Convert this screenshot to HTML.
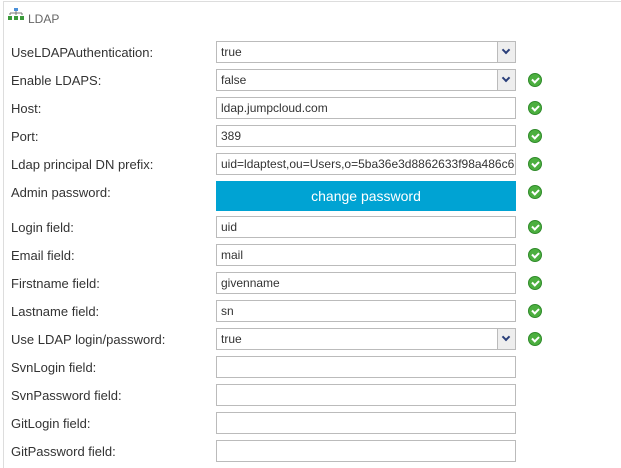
<!DOCTYPE html>
<html style="overflow:hidden;height:468px"><head><style>
body{margin:0;width:621px;height:468px;background:#fff;font-family:"Liberation Sans",sans-serif;position:relative;overflow:hidden}
.frame{position:absolute;left:3px;top:1px;width:630px;height:470px;border-left:1px solid #ddd;border-top:1px solid #ddd}
.t{position:absolute;left:28px;top:12px;font-size:12px;color:#666}
.l{position:absolute;left:11px;font-size:13px;color:#333}
.i{position:absolute;left:216px;height:20px;border:1px solid #bbb;box-sizing:content-box;font-size:12px;color:#333;line-height:20px;padding-left:4px;width:294px;overflow:hidden;white-space:nowrap}
.a{position:absolute;right:0;top:0;width:17px;height:20px;background:#eee;border-left:1px solid #bbb}
.a:after{content:"";position:absolute;left:5px;top:5px;width:4px;height:4px;border-right:2px solid #2a3f7a;border-bottom:2px solid #2a3f7a;transform:rotate(45deg)}
.c{position:absolute;left:528px;width:12px;height:12px;border-radius:50%;background:#4caf3f;border:1px solid #2f8a2a}
.c:after{content:"";position:absolute;left:4px;top:2px;width:3px;height:5px;border-right:2px solid #fff;border-bottom:2px solid #fff;transform:rotate(45deg)}
.b{position:absolute;left:216px;top:181px;width:300px;height:30px;background:#00a3d3;color:#fff;font-size:14px;text-align:center;line-height:30px}
</style></head><body>
<div class="frame"></div>
<svg style="position:absolute;left:7px;top:8px" width="18" height="13"><rect x="7" y="0" width="4" height="3" fill="#4a90d9"/><path d="M9 3v2M3 5h12M3 5v2M9 5v2M15 5v2" stroke="#777" fill="none"/><rect x="1" y="8" width="4" height="4" fill="#3a9a3a"/><rect x="7" y="8" width="4" height="4" fill="#3a9a3a"/><rect x="13" y="8" width="4" height="4" fill="#3a9a3a"/></svg>
<div class="t">LDAP</div>
<div class="l" style="top:45px">UseLDAPAuthentication:</div><div class="i" style="top:41px">true<div class="a"></div></div>
<div class="l" style="top:73px">Enable LDAPS:</div><div class="i" style="top:69px">false<div class="a"></div></div><div class="c" style="top:73px"></div>
<div class="l" style="top:101px">Host:</div><div class="i" style="top:97px">ldap.jumpcloud.com</div><div class="c" style="top:101px"></div>
<div class="l" style="top:129px">Port:</div><div class="i" style="top:125px">389</div><div class="c" style="top:129px"></div>
<div class="l" style="top:157px">Ldap principal DN prefix:</div><div class="i" style="top:153px">uid=ldaptest,ou=Users,o=5ba36e3d8862633f98a486c6</div><div class="c" style="top:157px"></div>
<div class="l" style="top:185px">Admin password:</div><div class="b">change password</div><div class="c" style="top:185px"></div>
<div class="l" style="top:220px">Login field:</div><div class="i" style="top:216px">uid</div><div class="c" style="top:220px"></div>
<div class="l" style="top:248px">Email field:</div><div class="i" style="top:244px">mail</div><div class="c" style="top:248px"></div>
<div class="l" style="top:276px">Firstname field:</div><div class="i" style="top:272px">givenname</div><div class="c" style="top:276px"></div>
<div class="l" style="top:304px">Lastname field:</div><div class="i" style="top:300px">sn</div><div class="c" style="top:304px"></div>
<div class="l" style="top:332px">Use LDAP login/password:</div><div class="i" style="top:328px">true<div class="a"></div></div><div class="c" style="top:332px"></div>
<div class="l" style="top:360px">SvnLogin field:</div><div class="i" style="top:356px"></div>
<div class="l" style="top:388px">SvnPassword field:</div><div class="i" style="top:384px"></div>
<div class="l" style="top:416px">GitLogin field:</div><div class="i" style="top:412px"></div>
<div class="l" style="top:444px">GitPassword field:</div><div class="i" style="top:440px"></div>
</body></html>
